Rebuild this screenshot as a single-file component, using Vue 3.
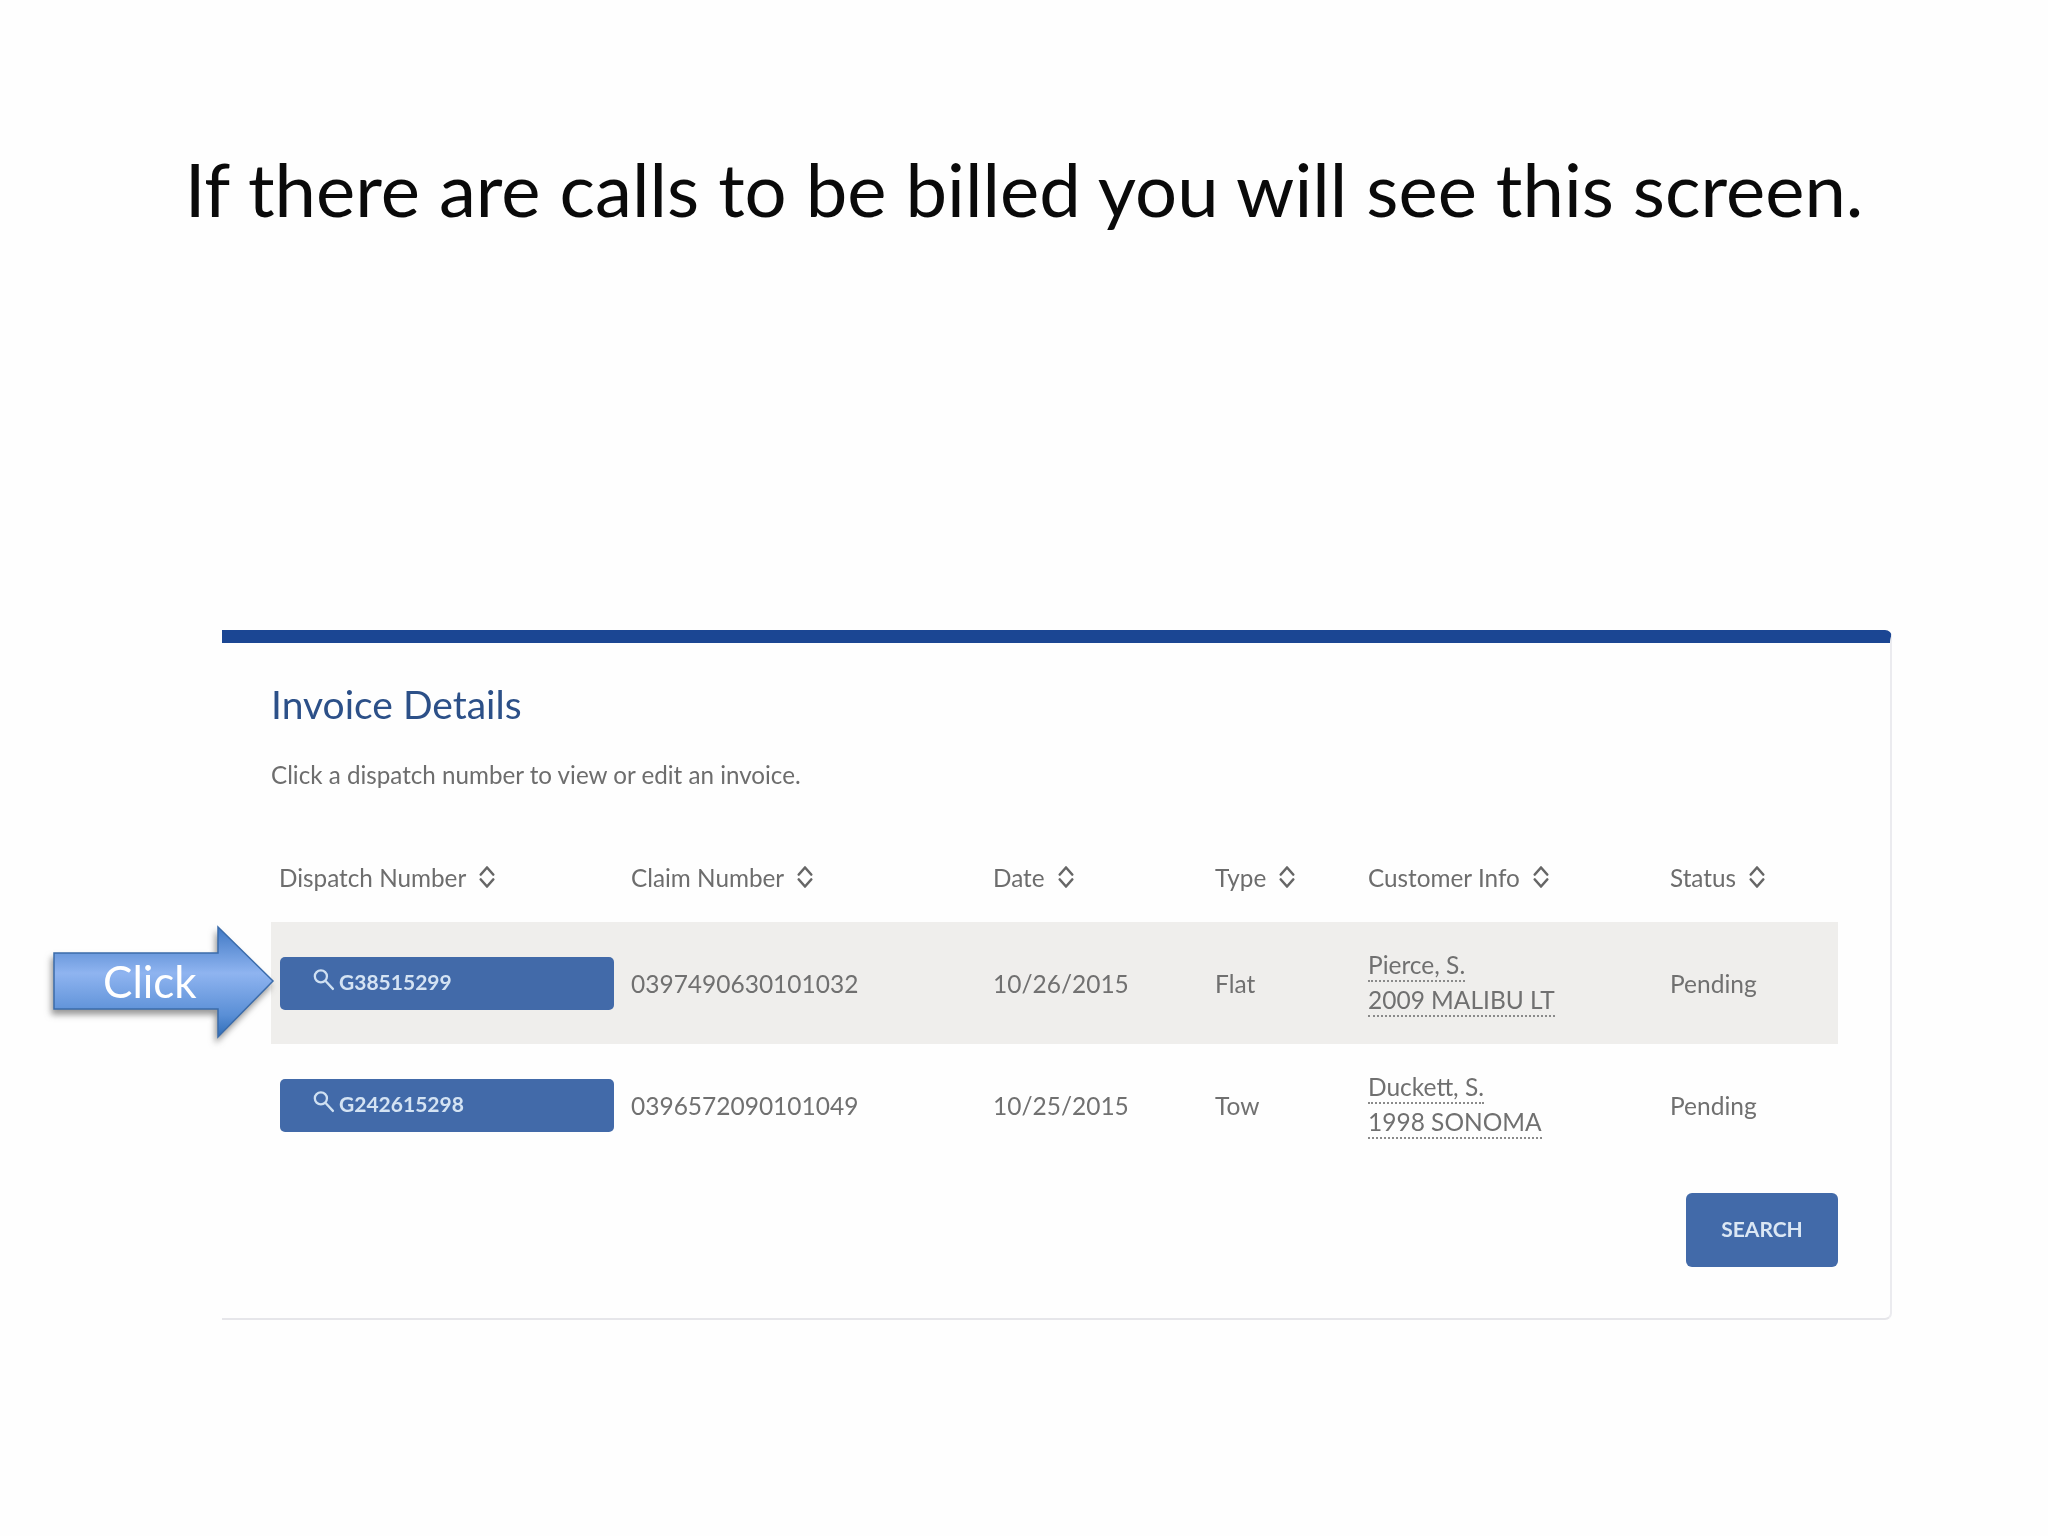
<script setup>
const columns = ['Dispatch Number', 'Claim Number', 'Date', 'Type', 'Customer Info', 'Status']
const rows = [
  { id: 'G38515299', claim: '0397490630101032', date: '10/26/2015', type: 'Flat', name: 'Pierce, S.', car: '2009 MALIBU LT', status: 'Pending', active: true },
  { id: 'G242615298', claim: '0396572090101049', date: '10/25/2015', type: 'Tow', name: 'Duckett, S.', car: '1998 SONOMA', status: 'Pending', active: false }
]
</script>

<template>
  <main class="slide">
    <h1 class="headline">If there are calls to be billed you will see this screen.</h1>

    <section class="card">
      <h2 class="card-title">Invoice Details</h2>
      <p class="card-sub">Click a dispatch number to view or edit an invoice.</p>

      <div class="grid head">
        <div v-for="c in columns" :key="c" class="th">
          <span>{{ c }}</span>
          <svg class="sort" viewBox="0 0 16 24" width="16" height="24" fill="none" stroke="#666" stroke-width="2.6" stroke-linecap="round" stroke-linejoin="round">
            <path d="M1.800 9.500 8 2.500l6.200 7M1.800 14.500 8 21.500l6.200-7" />
          </svg>
        </div>
      </div>

      <div v-for="r in rows" :key="r.id" class="grid row" :class="{ active: r.active }">
        <div class="cell">
          <button class="dispatch" type="button">
            <svg class="mag" viewBox="0 0 22 22" width="23" height="23" fill="none" stroke="#cfe0f2" stroke-width="2.200" stroke-linecap="round">
              <circle cx="8.500" cy="8" r="5.800" />
              <path d="m13 12.500 7 7.500" />
            </svg>
            <span>{{ r.id }}</span>
          </button>
        </div>
        <div class="cell">{{ r.claim }}</div>
        <div class="cell">{{ r.date }}</div>
        <div class="cell">{{ r.type }}</div>
        <div class="cell info">
          <span class="dotted">{{ r.name }}</span>
          <span class="dotted">{{ r.car }}</span>
        </div>
        <div class="cell">{{ r.status }}</div>
      </div>

      <div class="actions">
        <button class="search" type="button">SEARCH</button>
      </div>
    </section>

    <div class="callout">
      <svg viewBox="0 0 222 114" width="222" height="114" class="arrow">
        <defs>
          <linearGradient id="arrowFill" x1="0" y1="0" x2="0" y2="1">
            <stop offset="0" stop-color="#3f78c4" />
            <stop offset="0.42" stop-color="#8fb4f0" />
            <stop offset="0.8" stop-color="#5a8fd6" />
            <stop offset="1" stop-color="#2f6db8" />
          </linearGradient>
        </defs>
        <path d="M1 28H165V2L220 56 165 112V84H1Z" fill="url(#arrowFill)" stroke="#3b6cab" stroke-width="1.500" />
      </svg>
      <span class="callout-text">Click</span>
    </div>
  </main>
</template>

<style scoped>
.slide {
  position: relative;
  width: 2048px;
  height: 1536px;
  overflow: hidden;
  background: #fefefe;
  font-family: Lato, "Open Sans", sans-serif;
  filter: blur(0.4px);
}
.headline {
  margin: 0;
  padding-top: 139px;
  height: 630px;
  box-sizing: border-box;
  font-size: 74.25px;
  line-height: 100px;
  font-weight: 400;
  color: #0a0a0a;
  text-align: center;
}
.card {
  margin-left: 222px;
  width: 1670px;
  height: 690px;
  box-sizing: border-box;
  padding: 0 52px 0 49px;
  background: #fefefe;
  border-top: 13px solid #1b4693;
  border-right: 2px solid #ebebef;
  border-bottom: 2px solid #e6e6ea;
  border-radius: 0 7px 7px 0;
}
.card-title {
  margin: 0;
  padding-top: 39px;
  font-size: 39px;
  line-height: 44px;
  font-weight: 400;
  color: #2c5088;
}
.card-sub {
  margin: 33px 0 0;
  font-size: 24.2px;
  line-height: 32px;
  color: #6d6d6d;
}
.grid {
  display: grid;
  grid-template-columns: 351px 362px 222px 153px 302px 1fr;
  padding-left: 9px;
  align-items: center;
}
.head {
  grid-template-columns: 352px 362px 222px 153px 302px 1fr;
  padding-left: 8px;
  margin-top: 58px;
  height: 56px;
  margin-bottom: 17px;
  font-size: 24.3px;
  color: #6d6d6d;
}
.th {
  display: flex;
  align-items: center;
  gap: 13px;
}
.sort {
  flex: none;
}
.row {
  height: 122px;
  font-size: 24.5px;
  color: #707070;
}
.row.active {
  background: #efeeec;
}
.dispatch {
  display: flex;
  align-items: center;
  gap: 4px;
  width: 334px;
  height: 53px;
  padding: 0 0 3px 32px;
  box-sizing: border-box;
  border: 0;
  border-radius: 5px;
  background: #426aa9;
  color: #d4e3f3;
  font: 700 21px Lato, sans-serif;
}
.mag {
  flex: none;
  margin-top: -4px;
}
.info {
  display: flex;
  flex-direction: column;
  align-items: flex-start;
  gap: 3px;
}
.dotted {
  line-height: 30px;
  border-bottom: 2px dotted #8a8a8a;
}
.actions {
  display: flex;
  justify-content: flex-end;
  margin-top: 27px;
}
.search {
  width: 152px;
  height: 74px;
  padding: 0 0 3px;
  border: 0;
  border-radius: 6px;
  background: #426aa9;
  color: #dbe7f4;
  font: 700 21px Lato, sans-serif;
}
.callout {
  position: absolute;
  left: 53px;
  top: 925px;
  width: 222px;
  height: 114px;
}
.arrow {
  display: block;
  overflow: visible;
  filter: drop-shadow(-2px 5px 3px rgba(70, 70, 70, 0.55));
}
.callout-text {
  position: absolute;
  left: 50px;
  top: 26px;
  font-size: 44px;
  line-height: 60px;
  color: #fff;
}
</style>
